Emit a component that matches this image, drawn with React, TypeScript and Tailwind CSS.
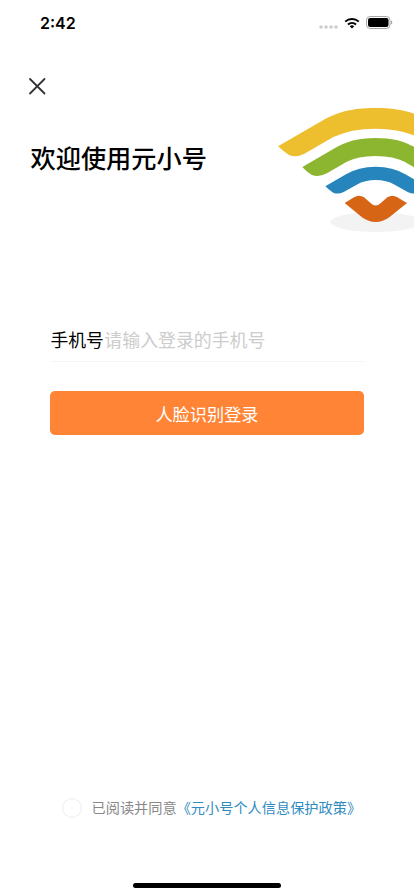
import {useState} from "react"

function StatusBar() {
	return (
		<div className="h-[46px] pl-10 pr-[21px] flex items-center justify-between">
			<span className="font-['Inter','Liberation_Sans',sans-serif] text-[16px] leading-[46px] font-semibold">2:42</span>
			<div className="flex items-center">
				<svg viewBox="0 0 19 4" className="w-[19px] h-1 mt-2 mr-[6px]" fill="#cdcdcd" aria-hidden="true">
					<circle cx="2" cy="2" r="1.800" />
					<circle cx="7" cy="2" r="1.800" />
					<circle cx="12" cy="2" r="1.800" />
					<circle cx="17" cy="2" r="1.800" />
				</svg>
				<svg viewBox="0 0 16 12" className="w-4 h-3 mr-[6px] mb-px" aria-hidden="true">
					<path d="M1.200 4.600a10 10 0 0 1 13.600 0M3.900 7.500a6.200 6.200 0 0 1 8.200 0" fill="none" stroke="#000" strokeWidth="1.900" />
					<path d="M5.800 9.300a3.400 3.400 0 0 1 4.400 0L8 11.600z" />
				</svg>
				<svg viewBox="0 0 27 13" className="w-[27px] h-[13px] mb-px" aria-hidden="true">
					<rect x=".5" y=".5" width="23.500" height="12" rx="3.600" fill="none" stroke="#a6a6a6" />
					<rect x="2" y="2" width="20.500" height="9" rx="2.200" />
					<path d="M25 4.500v4c.8-.3 1.300-1.100 1.300-2s-.5-1.700-1.300-2z" fill="#a6a6a6" />
				</svg>
			</div>
		</div>
	)
}

function Logo() {
	return (
		<svg viewBox="0 0 432 435" className="w-36 h-[145px] shrink-0" aria-hidden="true">
			<ellipse cx="317" cy="381" rx="136" ry="30" fill="#f3f3f3" />
			<path
				fill="#edbe2d"
				d="M24 154L150 81C200 52 242 39 317 39S434 52 484 81L610 154Q592 171 577 180Q556 189 532 177L444 126Q392 101 317 101T190 126L102 177Q78 189 57 180Q42 171 24 154Z"
			/>
			<path
				fill="#8cb630"
				d="M97 216L190 162C230 139 263 129 317 129S404 139 444 162L537 216Q519 235 508 240Q487 248 463 235L405 201Q372 183 317 183T229 201L171 235Q147 248 126 240Q115 235 97 216Z"
			/>
			<path
				fill="#2685bc"
				d="M166 274L228 238Q265 215 317 215T406 238L468 274Q452 289 444 293Q430 299 413 291L374 269Q349 255 317 255T260 269L221 291Q204 299 190 293Q182 289 166 274Z"
			/>
			<path
				fill="#d76516"
				d="M224 324L252 307Q267 297 282 307L299 322Q317 341 335 322L352 307Q367 297 382 307L411 324L358 367Q339 381 317 381T276 367Z"
			/>
		</svg>
	)
}

export default function App() {
	const [phone, setPhone] = useState("")
	const [agreed, setAgreed] = useState(false)

	return (
		<div className="w-[414px] h-[896px] overflow-hidden bg-white text-black flex flex-col font-['Noto_Sans_CJK_SC',sans-serif]">
			<StatusBar />

			<header className="h-[194px] flex justify-between items-end">
				<div className="self-start pl-[29px] pt-8">
					<button className="block size-4 cursor-pointer" aria-label="关闭">
						<svg viewBox="0 0 16 16" className="size-4 overflow-visible" aria-hidden="true">
							<path d="M1 1l14.500 14.500M15.500 1l-14.500 14.500" stroke="#333338" strokeWidth="1.800" strokeLinecap="round" />
						</svg>
					</button>
					<h1 className="mt-11 ml-[1.500px] text-[25.200px] leading-[38px] font-medium whitespace-nowrap">欢迎使用元小号</h1>
				</div>
				<Logo />
			</header>

			<main className="mt-[78px] mx-[50px]">
				<label className="h-11 pl-[0.5px] pb-px flex items-center border-b border-[#f5f5f5]">
					<span className="text-[17.800px] leading-[27px] shrink-0">手机号</span>
					<input
						type="tel"
						value={phone}
						onChange={(e) => setPhone(e.target.value)}
						placeholder="请输入登录的手机号"
						className="min-w-0 flex-1 pl-[0.5px] text-[17.900px] leading-[27px] outline-none placeholder:text-[#cccccc]"
					/>
				</label>
				<button className="mt-[29px] w-full h-11 pt-px rounded-[5px] bg-[#ff8435] text-white text-[17.200px] cursor-pointer">
					人脸识别登录
				</button>
			</main>

			<footer className="mt-auto flex flex-col items-center">
				<div className="w-full pl-[62px] flex items-center text-[14.200px] leading-[22px] whitespace-nowrap">
					<button
						aria-label="同意"
						onClick={() => setAgreed(!agreed)}
						className={`size-5 mr-[9.500px] rounded-full border cursor-pointer ${agreed ? "border-[#ff8435] bg-[#ff8435]" : "border-[#eeeeee]"}`}
					/>
					<span className="-mt-0.5 text-[#888888]">已阅读并同意</span>
					<a href="#" className="-mt-0.5 text-[#2f8bc0]">
						《元小号个人信息保护政策》
					</a>
				</div>
				<div className="mt-[65px] mb-2 w-[148px] h-[5px] rounded-full bg-black" />
			</footer>
		</div>
	)
}
